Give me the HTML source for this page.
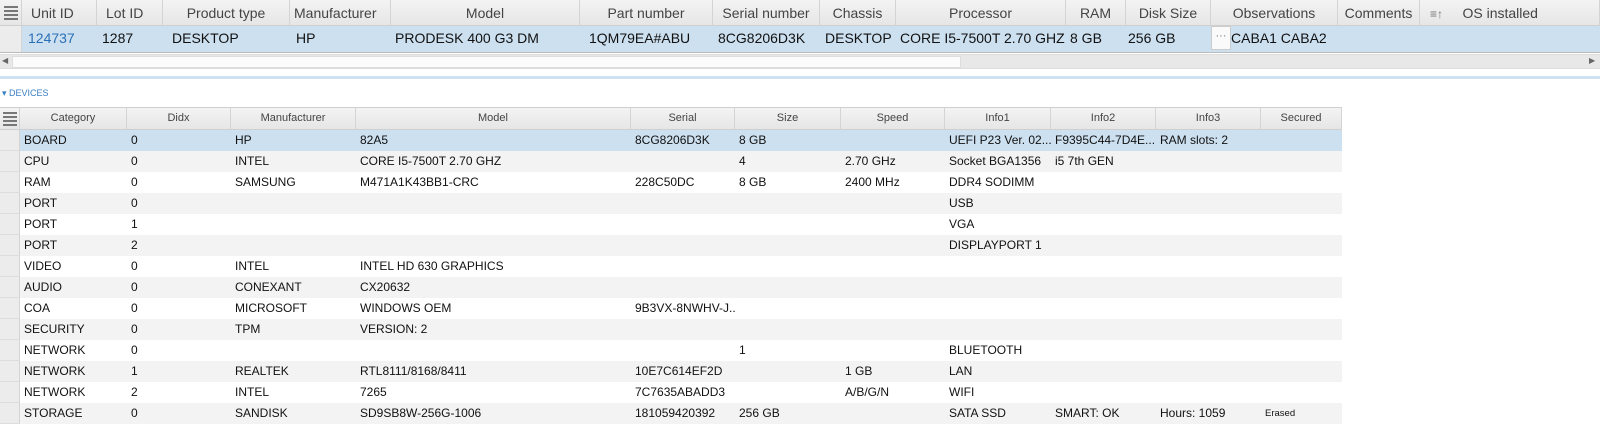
<!DOCTYPE html><html><head><style>
*{margin:0;padding:0;box-sizing:border-box}
html{overflow:hidden;width:1600px;height:435px}
body{width:1600px;height:435px;background:#fff;font-family:"Liberation Sans",sans-serif;position:relative;overflow:hidden;color:#111}
.abs{position:absolute}
.row{position:absolute;left:0;display:flex}
.row>div{flex:none;white-space:nowrap;overflow:hidden}
.th{background:linear-gradient(#f3f3f3,#e6e6e6);border-right:1px solid #d4d4d4;border-bottom:1px solid #cfcfcf;color:#444;text-align:center}
.ham{background:linear-gradient(#f3f3f3,#e6e6e6);border-right:1px solid #d4d4d4;position:relative}
.ham i{position:absolute;left:4px;height:2px;background:#777;width:14px}
</style></head><body>
<div class="row" style="top:0;height:26px;font-size:14px;line-height:26px">
<div class="ham" style="width:22px;height:26px;border-bottom:1px solid #cfcfcf"><i style="top:6px"></i><i style="top:10px"></i><i style="top:14px"></i><i style="top:18px"></i></div>
<div class="th" style="width:75px;text-align:left;padding-left:9px">Unit ID</div>
<div class="th" style="width:66px;text-align:left;padding-left:9px">Lot ID</div>
<div class="th" style="width:127px">Product type</div>
<div class="th" style="width:101px;text-align:left;padding-left:4px">Manufacturer</div>
<div class="th" style="width:189px">Model</div>
<div class="th" style="width:133px">Part number</div>
<div class="th" style="width:107px">Serial number</div>
<div class="th" style="width:76px">Chassis</div>
<div class="th" style="width:170px">Processor</div>
<div class="th" style="width:60px">RAM</div>
<div class="th" style="width:85px">Disk Size</div>
<div class="th" style="width:127px">Observations</div>
<div class="th" style="width:82px">Comments</div>
<div class="th" style="width:180px;text-align:left;padding-left:10px"><span style="color:#777;font-size:12px">&#8801;&#8593;</span>&nbsp;&nbsp;&nbsp;&nbsp;&nbsp;OS installed</div>
</div>
<div class="row" style="top:26px;height:26px;font-size:14px;line-height:25px;background:#cde0f0;width:1600px">
<div class="ham" style="width:22px;height:26px;background:#ececec"></div>
<div style="width:75px;padding-left:6px;color:#2a6fb5">124737</div>
<div style="width:66px;padding-left:5px">1287</div>
<div style="width:127px;padding-left:9px">DESKTOP</div>
<div style="width:101px;padding-left:6px">HP</div>
<div style="width:189px;padding-left:4px">PRODESK 400 G3 DM</div>
<div style="width:133px;padding-left:9px">1QM79EA#ABU</div>
<div style="width:107px;padding-left:5px">8CG8206D3K</div>
<div style="width:76px;padding-left:5px">DESKTOP</div>
<div style="width:170px;padding-left:4px">CORE I5-7500T 2.70 GHZ</div>
<div style="width:60px;padding-left:4px">8 GB</div>
<div style="width:85px;padding-left:2px">256 GB</div>
<div style="width:420px;padding-left:0;position:relative"><span style="display:inline-block;width:20px;height:24px;background:#fafafa;border:1px solid #ccc;color:#777;font-size:11px;text-align:center;line-height:18px;vertical-align:top">···</span>CABA1 CABA2</div>
</div>
<div class="abs" style="top:52px;left:0;width:1600px;height:1px;background:#bbb"></div>
<div class="abs" style="top:54px;left:0;width:1600px;height:1px;background:#ddd"></div>
<div class="abs" style="top:55px;left:0;width:1600px;height:14px;background:#e8e8e8;border-bottom:1px solid #ddd"></div>
<div class="abs" style="top:56px;left:12px;width:949px;height:12px;background:#fbfbfb;border:1px solid #ddd"></div>
<div class="abs" style="top:56px;left:2px;font-size:8px;color:#666">&#9664;</div>
<div class="abs" style="top:56px;left:1589px;font-size:8px;color:#666">&#9654;</div>
<div class="abs" style="top:76px;left:0;width:1600px;height:3px;background:#cfe2f1"></div>
<div class="abs" style="top:88px;left:2px;font-size:9px;color:#3a7fc4">&#9662; DEVICES</div>
<div class="abs" style="top:107px;left:0;width:1342px;height:1px;background:#cfcfcf"></div>
<div class="row" style="top:108px;height:22px;font-size:11px;line-height:21px">
<div class="ham" style="width:20px;height:22px;border-bottom:1px solid #cfcfcf"><i style="top:4px;left:3px"></i><i style="top:8px;left:3px"></i><i style="top:12px;left:3px"></i><i style="top:16px;left:3px"></i></div>
<div class="th" style="width:107px">Category</div>
<div class="th" style="width:104px">Didx</div>
<div class="th" style="width:125px">Manufacturer</div>
<div class="th" style="width:275px">Model</div>
<div class="th" style="width:104px">Serial</div>
<div class="th" style="width:106px">Size</div>
<div class="th" style="width:104px">Speed</div>
<div class="th" style="width:106px">Info1</div>
<div class="th" style="width:105px">Info2</div>
<div class="th" style="width:105px">Info3</div>
<div class="th" style="width:81px">Secured</div>
</div>
<div id="b"></div>
<script>
var d=[["BOARD","0","HP","82A5","8CG8206D3K","8 GB","","UEFI P23 Ver. 02...","F9395C44-7D4E...","RAM slots: 2",""],
["CPU","0","INTEL","CORE I5-7500T 2.70 GHZ","","4","2.70 GHz","Socket BGA1356","i5 7th GEN","",""],
["RAM","0","SAMSUNG","M471A1K43BB1-CRC","228C50DC","8 GB","2400 MHz","DDR4 SODIMM","","",""],
["PORT","0","","","","","","USB","","",""],
["PORT","1","","","","","","VGA","","",""],
["PORT","2","","","","","","DISPLAYPORT 1","","",""],
["VIDEO","0","INTEL","INTEL HD 630 GRAPHICS","","","","","","",""],
["AUDIO","0","CONEXANT","CX20632","","","","","","",""],
["COA","0","MICROSOFT","WINDOWS OEM","9B3VX-8NWHV-J...","","","","","",""],
["SECURITY","0","TPM","VERSION: 2","","","","","","",""],
["NETWORK","0","","","","1","","BLUETOOTH","","",""],
["NETWORK","1","REALTEK","RTL8111/8168/8411","10E7C614EF2D","","1 GB","LAN","","",""],
["NETWORK","2","INTEL","7265","7C7635ABADD3","","A/B/G/N","WIFI","","",""],
["STORAGE","0","SANDISK","SD9SB8W-256G-1006","181059420392","256 GB","","SATA SSD","SMART: OK","Hours: 1059","Erased"]];
var w=[107,104,125,275,104,106,104,106,105,105,81],h="";
d.forEach(function(r,i){var bg=i==0?"#cde0f0":(i%2?"#f3f3f3":"#fff");
h+='<div class="row" style="top:'+(130+i*21)+'px;height:21px;font-size:12px;line-height:21px;background:'+bg+';width:1342px"><div style="width:20px;height:21px;background:#ececec;border-right:1px solid #d4d4d4;border-bottom:1px solid #ddd"></div>';
r.forEach(function(c,j){h+='<div style="width:'+w[j]+'px;padding-left:4px;'+(j==10?'font-size:9.5px':'')+'">'+c+'</div>'});h+='</div>'});
document.getElementById("b").innerHTML=h;
</script>
</body></html>
